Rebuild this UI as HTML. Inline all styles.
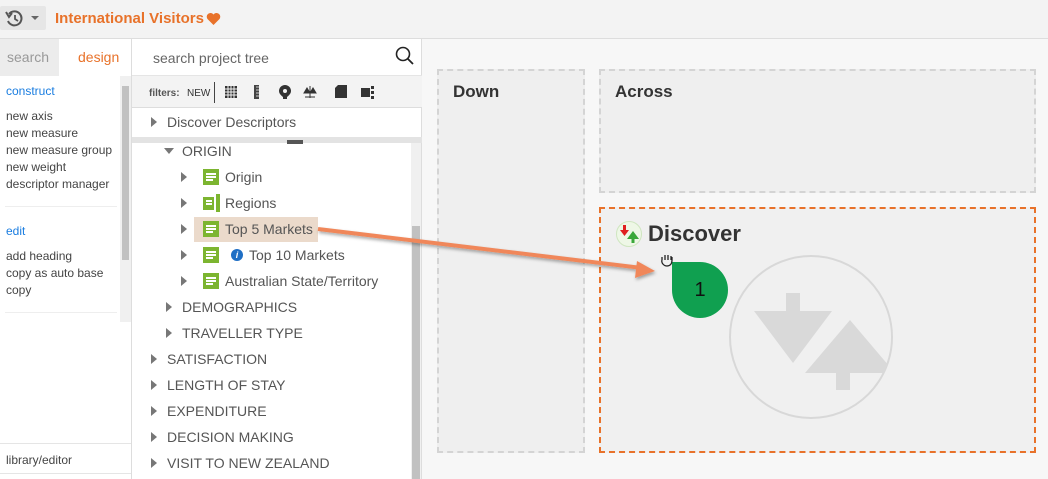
<!DOCTYPE html>
<html><head><style>
*{margin:0;padding:0;box-sizing:border-box}
body{width:1048px;height:479px;overflow:hidden;background:#f7f7f7;font-family:"Liberation Sans",sans-serif;position:relative;color:#555}
.a{position:absolute}
.t{position:absolute;font-size:14px;color:#555;white-space:nowrap;line-height:16px}
.tri{position:absolute;width:0;height:0;border-top:5px solid transparent;border-bottom:5px solid transparent;border-left:6px solid #777}
.ic{position:absolute;width:16px;height:16px;background:#7cb530}
.ic i{position:absolute;left:3px;height:2px;background:#fff}
.l{font-size:12px;color:#444;position:absolute;left:6px}
</style></head><body>
<div class="a" style="left:0;top:0;width:1048px;height:38px;background:#f3f3f3"></div>
<div class="a" style="left:0;top:6px;width:46px;height:24px;background:#e6e6e6;border-radius:2px"></div>
<svg class="a" style="left:4px;top:9px" width="40" height="18"><path d="M5 5 A7 7 0 1 1 4 12" fill="none" stroke="#555" stroke-width="2"/><path d="M2 3 L5 8 L8 4" fill="none" stroke="#555" stroke-width="2"/><path d="M11 6 V10 L14 12" fill="none" stroke="#555" stroke-width="1.8"/><path d="M27 7 L35 7 L31 11Z" fill="#666"/></svg>
<div class="t" style="left:55px;top:11px;font-size:15px;font-weight:bold;color:#e8722a">International Visitors</div>
<svg class="a" style="left:206px;top:12px" width="15" height="14"><path d="M7.5 13 L1.5 7 A3.6 3.6 0 0 1 7.5 2.5 A3.6 3.6 0 0 1 13.5 7 Z" fill="#e8722a"/></svg>
<div class="a" style="left:0;top:38px;width:1048px;height:1px;background:#ddd"></div>
<div class="a" style="left:0;top:39px;width:132px;height:440px;background:#fff;border-right:1px solid #ddd"></div>
<div class="a" style="left:0;top:39px;width:59px;height:37px;background:#ececec"></div>
<div class="t" style="left:7px;top:49px;color:#999">search</div>
<div class="t" style="left:78px;top:49px;color:#e8722a">design</div>
<div class="a" style="left:120px;top:76px;width:11px;height:246px;background:#f0f0f0"></div>
<div class="a" style="left:122px;top:86px;width:7px;height:174px;background:#c1c1c1"></div>
<div class="l" style="top:84px;color:#1a7de0">construct</div>
<div class="l" style="top:109px">new axis</div>
<div class="l" style="top:126px">new measure</div>
<div class="l" style="top:143px">new measure group</div>
<div class="l" style="top:160px">new weight</div>
<div class="l" style="top:177px">descriptor manager</div>
<div class="a" style="left:5px;top:206px;width:112px;height:1px;background:#eee"></div>
<div class="l" style="top:224px;color:#1a7de0">edit</div>
<div class="l" style="top:249px">add heading</div>
<div class="l" style="top:266px">copy as auto base</div>
<div class="l" style="top:283px">copy</div>
<div class="a" style="left:5px;top:312px;width:112px;height:1px;background:#eee"></div>
<div class="a" style="left:0;top:443px;width:131px;height:1px;background:#e5e5e5"></div>
<div class="l" style="top:453px">library/editor</div>
<div class="a" style="left:0;top:473px;width:131px;height:1px;background:#e5e5e5"></div>
<div class="a" style="left:132px;top:39px;width:290px;height:440px;background:#fff;border-right:1px solid #ddd"></div>
<div class="t" style="left:153px;top:50px;color:#666">search project tree</div>
<svg class="a" style="left:395px;top:46px" width="20" height="20"><circle cx="8" cy="8" r="6.5" fill="none" stroke="#222" stroke-width="1.6"/><path d="M13 13 L18 18" stroke="#222" stroke-width="1.8"/></svg>
<div class="a" style="left:132px;top:75px;width:290px;height:33px;background:#f3f3f3;border-top:1px solid #e5e5e5;border-bottom:1px solid #ddd"></div>
<div class="t" style="left:149px;top:86px;font-size:10px;font-weight:bold;color:#555">filters:</div>
<div class="t" style="left:187px;top:86px;font-size:10px;color:#333">NEW</div>
<div class="a" style="left:214px;top:82px;width:1px;height:21px;background:#444"></div>
<svg class="a" style="left:224px;top:84px" width="160" height="16">
<g fill="#333"><rect x="1" y="2" width="12" height="12"/></g><g stroke="#f3f3f3" stroke-width="1"><path d="M4 2V14M7 2V14M10 2V14M1 5H13M1 8H13M1 11H13"/></g>
<rect x="30" y="1" width="5" height="14" fill="#444"/><path d="M32 3H35M32 6H35M32 9H35M32 12H35" stroke="#ccc"/>
<path d="M61 1a6 6 0 0 1 6 6c0 3-3 5-4 6v2h-4v-2c-1-1-4-3-4-6a6 6 0 0 1 6-6z" fill="#333"/><circle cx="61" cy="7" r="2" fill="#f3f3f3"/>
<path d="M86 2V14M81 13H91M80 9L83 4L86 9ZM86 9L89 4L92 9Z" stroke="#333" fill="#333" stroke-width="1"/>
<path d="M111 4L114 1H123V14H111Z" fill="#333"/>
<rect x="137" y="4" width="9" height="9" fill="#333"/><rect x="147" y="2" width="3" height="3" fill="#333"/><rect x="147" y="7" width="3" height="3" fill="#333"/><rect x="147" y="12" width="3" height="3" fill="#333"/>
</svg>
<div class="tri" style="left:151px;top:117px"></div>
<div class="t" style="left:167px;top:114px">Discover Descriptors</div>
<div class="a" style="left:132px;top:137px;width:290px;height:6px;background:#e3e3e3"></div>
<div class="a" style="left:287px;top:140px;width:16px;height:4px;background:#555"></div>
<div class="a" style="left:411px;top:143px;width:10px;height:336px;background:#f0f0f0"></div>
<div class="a" style="left:412px;top:226px;width:8px;height:253px;background:#c1c1c1"></div>
<div class="a" style="left:164px;top:148px;border-left:5px solid transparent;border-right:5px solid transparent;border-top:6px solid #777"></div>
<div class="t" style="left:182px;top:143px">ORIGIN</div>
<div class="a" style="left:194px;top:217px;width:124px;height:25px;background:#ebdacb"></div>
<div class="tri" style="left:181px;top:172px"></div><div class="ic" style="left:203px;top:169px"><i style="top:4px;width:10px"></i><i style="top:7px;width:10px"></i><i style="top:10px;width:7px"></i></div><div class="t" style="left:225px;top:169px">Origin</div>
<div class="tri" style="left:181px;top:198px"></div><div class="ic" style="left:203px;top:197px;width:11px;height:13px"><i style="top:3px;width:6px"></i><i style="top:6px;width:6px"></i></div><div class="a" style="left:216px;top:194px;width:4px;height:18px;background:#7cb530"></div><div class="t" style="left:225px;top:195px">Regions</div>
<div class="tri" style="left:181px;top:224px"></div><div class="ic" style="left:203px;top:221px"><i style="top:4px;width:10px"></i><i style="top:7px;width:10px"></i><i style="top:10px;width:7px"></i></div><div class="t" style="left:225px;top:221px">Top 5 Markets</div>
<div class="tri" style="left:181px;top:250px"></div><div class="ic" style="left:203px;top:247px"><i style="top:4px;width:10px"></i><i style="top:7px;width:10px"></i><i style="top:10px;width:7px"></i></div>
<div class="a" style="left:231px;top:249px;width:12px;height:12px;border-radius:50%;background:#1f6fc5;color:#fff;font-size:9px;font-style:italic;font-weight:bold;text-align:center;line-height:12px">i</div><div class="t" style="left:249px;top:247px">Top 10 Markets</div>
<div class="tri" style="left:181px;top:276px"></div><div class="ic" style="left:203px;top:273px"><i style="top:4px;width:10px"></i><i style="top:7px;width:10px"></i><i style="top:10px;width:7px"></i></div><div class="t" style="left:225px;top:273px">Australian State/Territory</div>
<div class="tri" style="left:166px;top:302px"></div><div class="t" style="left:182px;top:299px">DEMOGRAPHICS</div>
<div class="tri" style="left:166px;top:328px"></div><div class="t" style="left:182px;top:325px">TRAVELLER TYPE</div>
<div class="tri" style="left:151px;top:354px"></div><div class="t" style="left:167px;top:351px">SATISFACTION</div>
<div class="tri" style="left:151px;top:380px"></div><div class="t" style="left:167px;top:377px">LENGTH OF STAY</div>
<div class="tri" style="left:151px;top:406px"></div><div class="t" style="left:167px;top:403px">EXPENDITURE</div>
<div class="tri" style="left:151px;top:432px"></div><div class="t" style="left:167px;top:429px">DECISION MAKING</div>
<div class="tri" style="left:151px;top:458px"></div><div class="t" style="left:167px;top:455px">VISIT TO NEW ZEALAND</div>
<div class="a" style="left:437px;top:69px;width:148px;height:384px;background:#efefef;border:2px dashed #d4d4d4"></div>
<div class="t" style="left:453px;top:84px;font-size:17px;font-weight:bold;color:#333">Down</div>
<div class="a" style="left:599px;top:69px;width:437px;height:124px;background:#efefef;border:2px dashed #d4d4d4"></div>
<div class="t" style="left:615px;top:84px;font-size:17px;font-weight:bold;color:#333">Across</div>
<div class="a" style="left:599px;top:207px;width:437px;height:246px;background:#f0f0f0;border:2px dashed #e8722a"></div>
<div class="a" style="left:616px;top:221px;width:26px;height:26px;border-radius:50%;background:#eef7e6;border:1px solid #cfe6c0"></div>
<svg class="a" style="left:616px;top:221px" width="26" height="26"><path d="M4 9H13L8.5 15Z M7 4H10V9H7Z" fill="#e02020"/><path d="M11 18L17 10L23 18Z M15.5 18H18.5V22H15.5Z" fill="#3aa83a"/></svg>
<div class="t" style="left:648px;top:222px;font-size:22px;font-weight:bold;color:#333;line-height:24px">Discover</div>
<svg class="a" style="left:727px;top:252px" width="170" height="170"><defs><clipPath id="c"><circle cx="84" cy="85" r="81"/></clipPath></defs><circle cx="84" cy="85" r="81" fill="none" stroke="#d8d8d8" stroke-width="2"/><g clip-path="url(#c)"><path d="M27 59H105L66 111Z M59 41H73V59H59Z" fill="#d9d9d9"/><path d="M78 121L123 68L168 121Z M109 121H123V138H109Z" fill="#d9d9d9"/></g></svg>
<div class="a" style="left:672px;top:262px;width:56px;height:56px;background:#10a050;border-radius:0 28px 28px 28px;color:#111;font-size:20px;text-align:center;line-height:56px">1</div>
<svg class="a" style="left:659px;top:253px" width="16" height="14"><path d="M3 7 V4 M6 7 V2 M9 7 V2 M12 7 V3 M3 7 C2 10 5 13 8 13 C11 13 13 11 13 7 V4" fill="none" stroke="#222" stroke-width="1.3"/></svg>
<svg class="a" style="left:0;top:0;pointer-events:none" width="1048" height="479"><defs><filter id="s"><feDropShadow dx="1" dy="2" stdDeviation="1.5" flood-opacity="0.35"/></filter></defs><g filter="url(#s)"><path d="M318 229 L642 268" stroke="#f0875a" stroke-width="4"/><path d="M655 271 L637 261 L635 278Z" fill="#f0875a"/></g></svg>
</body></html>
